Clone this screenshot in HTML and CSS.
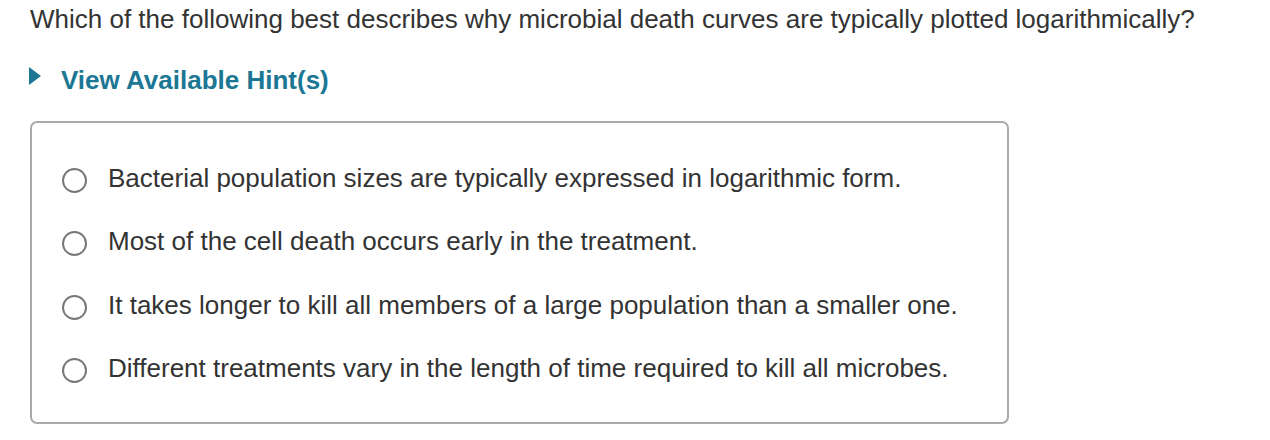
FILE: index.html
```html
<!DOCTYPE html>
<html>
<head>
<meta charset="utf-8">
<link rel="stylesheet" href="styles.css">
</head>
<body>
<div class="page">
  <p class="question">Which of the following best describes why microbial death curves are typically plotted logarithmically?</p>
  <div class="hint"><span class="tri"></span><span class="hint-text">View Available Hint(s)</span></div>
  <div class="box">
    <label class="opt"><span class="radio"></span><span>Bacterial population sizes are typically expressed in logarithmic form.</span></label>
    <label class="opt"><span class="radio"></span><span>Most of the cell death occurs early in the treatment.</span></label>
    <label class="opt"><span class="radio"></span><span>It takes longer to kill all members of a large population than a smaller one.</span></label>
    <label class="opt"><span class="radio"></span><span>Different treatments vary in the length of time required to kill all microbes.</span></label>
  </div>
</div>
</body>
</html>
```
FILE: styles.css
```css
html, body { margin: 0; padding: 0; background: #fff; }
body { font-family: "Liberation Sans", Arial, sans-serif; color: #333; }
.page { padding: 0 0 0 30px; }
.question { margin: 0; padding-top: 4px; font-size: 26px; line-height: 30px; color: #333; }
.hint { display: flex; align-items: flex-start; margin-top: 31px; height: 30px; font-size: 26px; line-height: 30px; }
.tri { width: 0; height: 0; margin-top: 2px; border-top: 9.5px solid transparent; border-bottom: 9.5px solid transparent; border-left: 12px solid #1c7795; margin-left: -1px; flex: none; }
.hint-text { margin-left: 20px; font-weight: bold; color: #1c7795; }
.box { margin-top: 26px; width: 979px; height: 303px; border: 2px solid #aaa; border-radius: 7px; padding: 40px 0 0 30px; box-sizing: border-box; display: flex; flex-direction: column; gap: 33.33px; }
.opt { display: flex; align-items: flex-start; height: 30px; font-size: 26px; line-height: 30px; color: #333; }
.radio { width: 21px; height: 21px; margin-top: 5px; border: 2px solid #777; border-radius: 50%; margin-right: 21px; flex: none; }
```
